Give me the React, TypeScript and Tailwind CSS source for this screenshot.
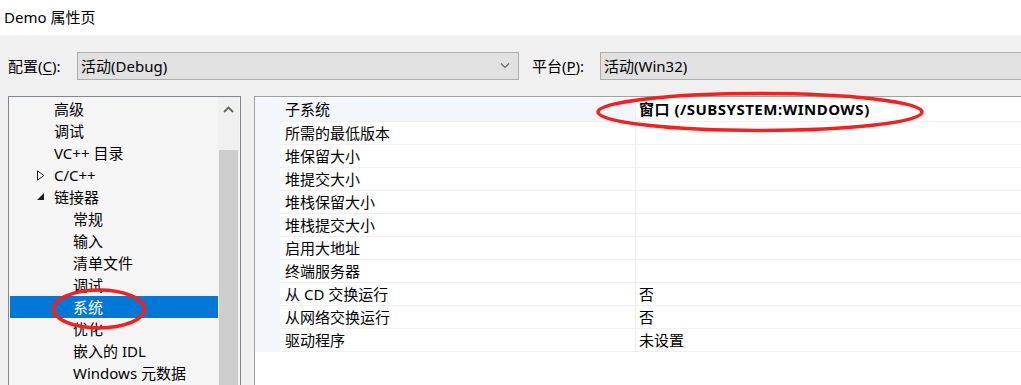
import React from "react";

const FONT = { fontFamily: '"Noto Sans", "Noto Sans CJK SC", sans-serif' };

type TreeItem = { label: string; level: number; arrow?: "open" | "closed"; selected?: boolean };

const treeItems: TreeItem[] = [
  { label: "高级", level: 0 },
  { label: "调试", level: 0 },
  { label: "VC++ 目录", level: 0 },
  { label: "C/C++", level: 0, arrow: "closed" },
  { label: "链接器", level: 0, arrow: "open" },
  { label: "常规", level: 1 },
  { label: "输入", level: 1 },
  { label: "清单文件", level: 1 },
  { label: "调试", level: 1 },
  { label: "系统", level: 1, selected: true },
  { label: "优化", level: 1 },
  { label: "嵌入的 IDL", level: 1 },
  { label: "Windows 元数据", level: 1 },
];

const rows: { name: string; value: string; bold?: boolean }[] = [
  { name: "子系统", value: "窗口 (/SUBSYSTEM:WINDOWS)", bold: true },
  { name: "所需的最低版本", value: "" },
  { name: "堆保留大小", value: "" },
  { name: "堆提交大小", value: "" },
  { name: "堆栈保留大小", value: "" },
  { name: "堆栈提交大小", value: "" },
  { name: "启用大地址", value: "" },
  { name: "终端服务器", value: "" },
  { name: "从 CD 交换运行", value: "否" },
  { name: "从网络交换运行", value: "否" },
  { name: "驱动程序", value: "未设置" },
];

function Combo({ text, width, arrow }: { text: string; width: string; arrow?: boolean }) {
  return (
    <div
      className={`${width} h-[28px] shrink-0 bg-[#e1e1e1] border border-[#adadad] flex items-center pl-[3px] pr-[8px] text-[15px] text-black`}
    >
      <span className="flex-1 whitespace-nowrap">{text}</span>
      {arrow && (
        <svg width="10" height="6" viewBox="0 0 10 6" className="shrink-0">
          <path d="M1 0.5 L5 4.5 L9 0.5" fill="none" stroke="#606060" strokeWidth="1.1" />
        </svg>
      )}
    </div>
  );
}

export default function App() {
  return (
    <div className="relative w-[1021px] h-[385px] overflow-hidden bg-[#f0f0f0] text-black" style={FONT}>
      <div className="h-[35px] bg-white flex items-center pl-[4px] text-[15px]">Demo 属性页</div>

      <div className="flex items-center mt-[17px] h-[28px]">
        <div className="ml-[8px] w-[69px] shrink-0 text-[15px] whitespace-nowrap">
          配置(<span className="underline underline-offset-2">C</span>):
        </div>
        <Combo text="活动(Debug)" width="w-[442px]" arrow />
        <div className="ml-[13px] w-[68px] shrink-0 text-[15px] whitespace-nowrap">
          平台(<span className="underline underline-offset-2">P</span>):
        </div>
        <Combo text="活动(Win32)" width="w-[440px]" />
      </div>

      <div className="flex mt-[16px] h-[300px]">
        {/* tree */}
        <div className="ml-[8px] w-[233px] shrink-0 border border-[#828790] bg-[#f5f5f5] flex">
          <div className="flex-1 pt-[1px] pl-[1px]">
            {treeItems.map((it, i) => (
              <div
                key={i}
                className={`h-[22px] flex items-center text-[15px] whitespace-nowrap ${
                  it.selected ? "bg-[#0078d7] text-white" : ""
                }`}
              >
                <span className="w-[27px]" />
                <span className="w-[17px] flex items-center">
                  {it.arrow === "closed" && (
                    <svg width="8" height="11" viewBox="0 0 8 11">
                      <path d="M0.5 0.8 L6.8 5.5 L0.5 10.2 Z" fill="none" stroke="#1e1e1e" strokeWidth="1" />
                    </svg>
                  )}
                  {it.arrow === "open" && (
                    <svg width="8" height="8" viewBox="0 0 8 8">
                      <path d="M7 0 L7 7 L0 7 Z" fill="#1e1e1e" />
                    </svg>
                  )}
                </span>
                <span className={it.level === 1 ? "pl-[19px]" : ""}>{it.label}</span>
              </div>
            ))}
          </div>
          <div className="w-[21px] bg-[#f0f0f0] flex flex-col items-center mr-[1px]">
            <div className="h-[22px] flex items-center justify-center mt-[1px]">
              <svg width="11" height="7" viewBox="0 0 11 7">
                <path d="M1 6 L5.5 1.5 L10 6" fill="none" stroke="#606060" strokeWidth="1.8" />
              </svg>
            </div>
            <div className="w-[19px] mt-[30px] flex-1 bg-[#cdcdcd]" />
          </div>
        </div>

        {/* grid */}
        <div className="ml-[13px] flex-1 border-l border-t border-[#a0a0a0] bg-white pt-[1px]">
          {rows.map((r, i) => (
            <div key={i} className={`flex ${i === 0 ? "h-[24px]" : "h-[23px]"}`}>
              <div className="w-[25px] shrink-0 bg-[#f3f6fb]" />
              <div
                className={`w-[356px] shrink-0 flex items-center pl-[5px] text-[15px] whitespace-nowrap border-b border-r border-[#f0f0f0] ${
                  i === 0 ? "bg-[#f3f6fb]" : ""
                }`}
              >
                {r.name}
              </div>
              <div
                className={`flex-1 flex items-center pl-[3px] text-[15px] whitespace-nowrap border-b border-[#f0f0f0] ${
                  r.bold ? "font-bold tracking-[0.5px]" : ""
                }`}
              >
                {r.value}
              </div>
            </div>
          ))}
        </div>
      </div>

      {/* red annotation ellipses */}
      <svg className="absolute left-0 top-0 pointer-events-none" width="1021" height="385">
        <ellipse cx="760" cy="112" rx="162" ry="18.5" fill="none" stroke="#ff1c1c" strokeWidth="3.5" />
        <ellipse cx="99" cy="309" rx="45.5" ry="19" fill="none" stroke="#ff1c1c" strokeWidth="3.5" />
      </svg>
    </div>
  );
}
